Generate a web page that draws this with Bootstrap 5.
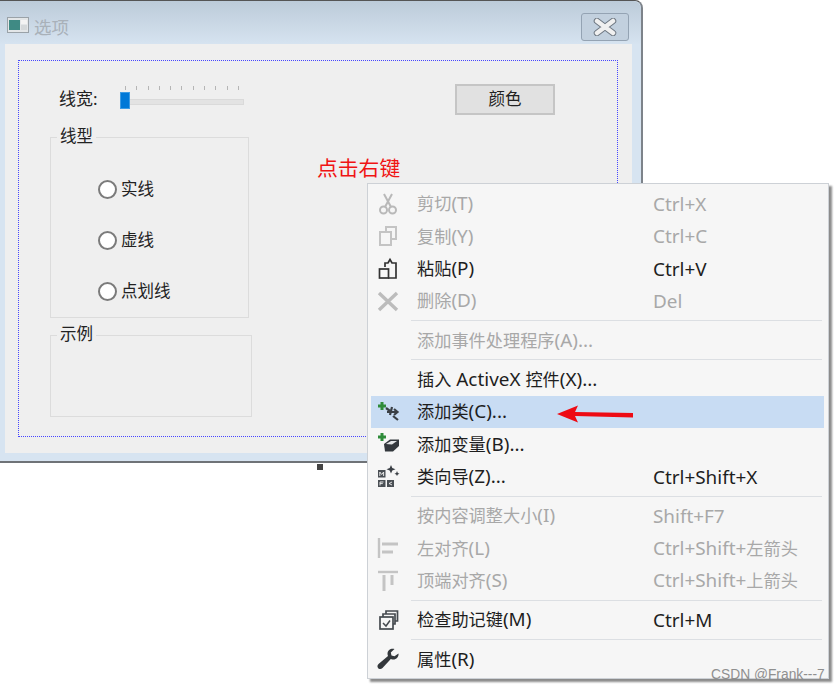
<!DOCTYPE html>
<html lang="zh-CN">

<head>
    <meta charset="UTF-8">
    <meta name="viewport" content="width=device-width, initial-scale=1.0">
    <title>选项</title>
    <link rel="stylesheet" href="https://cdn.jsdelivr.net/npm/bootstrap@5.3.2/dist/css/bootstrap.min.css">
    <style>
        body { background: #fff; font-family: "Noto Sans", "Noto Sans CJK SC", sans-serif; color: #222; overflow: hidden; }
        .stage { position: relative; width: 840px; height: 691px; overflow: hidden; }

        /* 对话框 */
        .dlg-window { width: 643px; height: 463px; background: #d7e4f1; border-top: 1px solid #555; border-right: 2px solid #7d838a; border-bottom: 2px solid #6f7377; border-top-right-radius: 8px; }
        .dlg-title { height: 43px; padding: 12px 12px 0 7px; background: linear-gradient(#bccbd9, #d6e3f0); border-top-right-radius: 8px; }
        .dlg-name { color: #a9b1b9; font-size: 17.5px; line-height: 28px; margin-left: 5px; }
        .dlg-close { width: 48px; height: 28px; border: 1px solid #94a3b3; border-radius: 3px; background: #c2d0de; }
        .dlg-client { width: 627px; height: 409px; margin-left: 5px; padding: 16px 14px 16px 13px; background: #efefef; }
        .dlg-frame { width: 600px; height: 377px; border: 1px dotted #4646ff; padding-top: 23px; font-size: 16.5px; }
        .left-col { width: 202px; margin-left: 31px; }
        .right-col { margin-left: 65px; }
        .slider-row { height: 30px; margin-left: 9px; }
        .slider-label { width: 61px; font-size: 17px; }
        .slider-box { position: relative; width: 124px; height: 26px; }
        .slider-ticks { height: 5px; margin: 0 5px; }
        .slider-ticks i { width: 1px; height: 4px; background: #b5b5b5; }
        .slider-track { margin-top: 8px; height: 6px; background: #e3e3e3; border: 1px solid #dadada; }
        .slider-thumb { position: absolute; left: 0; top: 6px; width: 10px; height: 17px; background: #0078d7; border: 1px solid #3d9be4; }
        fieldset.group-a, fieldset.group-b { border: 1px solid #dcdcdc; padding: 0; min-width: 0; }
        fieldset.group-a { width: 199px; height: 193px; margin-top: 11px; }
        fieldset.group-b { width: 202px; height: 94px; margin-top: 5px; }
        fieldset legend { float: none; width: auto; margin: 0 0 0 6px; padding: 0 3px 3px; font-size: 16.5px; line-height: 21px; }
        .radio-stack { padding: 28px 0 0 47px; gap: 27px; }
        .radio-line { height: 24px; }
        .radio-line .form-check-input { width: 19px; height: 19px; margin: 0 4px 0 0; border: 2px solid #7b7b7b; background-color: #fff; border-radius: 50%; }
        .color-btn { width: 100px; height: 31px; margin-left: 138px; padding: 0; background: #e1e1e1; border: 2px solid #c5c5c5; border-radius: 0; font-size: 16.5px; color: #222; }
        .hint-red { margin-top: 39px; color: #f01414; font-size: 20.8px; line-height: 28px; }
        .handle-dot { position: absolute; left: 317px; top: 464px; width: 6px; height: 6px; background: #444; }

        /* 右键菜单 */
        .ctx-menu { left: 367px; top: 183px; width: 462px; min-width: 0; padding: 3.6px 4px 3px 3px; margin: 0; background: #f6f6f6; border: 1px solid #cdd1d6; border-radius: 0; box-shadow: 3px 3px 2px #8b8b8b; font-size: 18.9px; }
        .ctx-menu .dropdown-item { height: 32.4px; padding: 0 0 0 5px; color: #1e1e1e; line-height: 32px; }
        .ctx-menu .dropdown-item.disabled { color: #a8a8a8; }
        .ctx-menu .dropdown-item.picked { background: #c8dcf3; }
        .ctx-menu .dropdown-divider { height: 1px; margin: 2.95px 2px 2.95px 40px; border-top: 1px solid #dcdfe3; opacity: 1; }
        .zh { font-size: 17.2px; }
        .ico { width: 24px; height: 24px; flex: none; margin-right: 17px; }
        .ctx-text { width: 236px; flex: none; }
        .red-arrow { position: absolute; left: 555px; top: 402px; z-index: 1001; }
        .mark-text { position: absolute; left: 711px; top: 665px; z-index: 1001; font-family: "Liberation Sans", sans-serif; font-size: 13.8px; line-height: 20px; color: #8f8f8f; }
    </style>
</head>

<body class="m-0">
    <div class="stage">
        <!-- 对话框 -->
        <div class="dlg-window">
            <div class="dlg-title d-flex align-items-start">
                <svg width="22" height="17" viewBox="0 0 22 17" class="mt-1">
                    <rect x="0.5" y="0.5" width="21" height="15" fill="#e3e6e8" stroke="#9aa2a8"/>
                    <rect x="2" y="3" width="11" height="10" fill="#3f8a84"/>
                    <rect x="14" y="3" width="6" height="4" fill="#f3f3f3"/>
                    <rect x="14" y="8" width="6" height="5" fill="#d4d8da"/>
                </svg>
                <span class="dlg-name">选项</span>
                <div class="dlg-close ms-auto d-flex align-items-center justify-content-center">
                    <svg width="24" height="18" viewBox="0 0 24 18">
                        <path d="M4 3 L20 15 M20 3 L4 15" stroke="#6d7680" stroke-width="6.5" stroke-linecap="round"/>
                        <path d="M4 3 L20 15 M20 3 L4 15" stroke="#f0f0f0" stroke-width="4.5" stroke-linecap="round"/>
                    </svg>
                </div>
            </div>
            <div class="dlg-client">
                <div class="dlg-frame d-flex">
                    <div class="left-col">
                        <div class="slider-row d-flex align-items-center">
                            <span class="slider-label">线宽:</span>
                            <div class="slider-box">
                                <div class="slider-ticks d-flex justify-content-between">
                                    <i></i><i></i><i></i><i></i><i></i><i></i><i></i><i></i><i></i><i></i><i></i>
                                </div>
                                <div class="slider-track"></div>
                                <div class="slider-thumb"></div>
                            </div>
                        </div>
                        <fieldset class="group-a">
                            <legend>线型</legend>
                            <div class="radio-stack d-flex flex-column">
                                <div class="radio-line d-flex align-items-center"><input class="form-check-input" type="radio" name="lineType"><span>实线</span></div>
                                <div class="radio-line d-flex align-items-center"><input class="form-check-input" type="radio" name="lineType"><span>虚线</span></div>
                                <div class="radio-line d-flex align-items-center"><input class="form-check-input" type="radio" name="lineType"><span>点划线</span></div>
                            </div>
                        </fieldset>
                        <fieldset class="group-b">
                            <legend>示例</legend>
                        </fieldset>
                    </div>
                    <div class="right-col">
                        <button type="button" class="btn color-btn">颜色</button>
                        <div class="hint-red">点击右键</div>
                    </div>
                </div>
            </div>
        </div>
        <div class="handle-dot"></div>

        <!-- 右键菜单 -->
        <div class="dropdown-menu d-block position-absolute ctx-menu">
            <a class="dropdown-item disabled d-flex align-items-center">
                <svg class="ico" viewBox="0 0 24 24" fill="none" stroke="#b9b9b9" stroke-width="2"><circle cx="7.5" cy="18" r="3.5"/><circle cx="16.5" cy="18" r="3.5"/><path d="M9 15 L16 2 M15 15 L8 2"/></svg>
                <span class="ctx-text"><span class="zh">剪切</span>(T)</span><span>Ctrl+X</span>
            </a>
            <a class="dropdown-item disabled d-flex align-items-center">
                <svg class="ico" viewBox="0 0 24 24" fill="none" stroke="#c4c4c4" stroke-width="2"><rect x="4" y="8" width="11" height="13"/><path d="M10 7 V3 H20 V15 H16"/></svg>
                <span class="ctx-text"><span class="zh">复制</span>(Y)</span><span>Ctrl+C</span>
            </a>
            <a class="dropdown-item d-flex align-items-center">
                <svg class="ico" viewBox="0 0 24 24" fill="none" stroke="#333" stroke-width="1.7"><path d="M9 10 V6 H12 L14 2.5 L16 6 H20 V21 H12"/><rect x="3.5" y="12" width="9" height="9"/></svg>
                <span class="ctx-text"><span class="zh">粘贴</span>(P)</span><span>Ctrl+V</span>
            </a>
            <a class="dropdown-item disabled d-flex align-items-center">
                <svg class="ico" viewBox="0 0 24 24" fill="none" stroke="#bcbcbc" stroke-width="3.4"><path d="M3 4 L21 21 M21 4 L3 21"/></svg>
                <span class="ctx-text"><span class="zh">删除</span>(D)</span><span>Del</span>
            </a>
            <div class="dropdown-divider"></div>
            <a class="dropdown-item disabled d-flex align-items-center">
                <span class="ico"></span><span class="ctx-text"><span class="zh">添加事件处理程序</span>(A)...</span>
            </a>
            <div class="dropdown-divider"></div>
            <a class="dropdown-item d-flex align-items-center">
                <span class="ico"></span><span class="ctx-text"><span class="zh">插入</span> ActiveX <span class="zh">控件</span>(X)...</span>
            </a>
            <a class="dropdown-item picked d-flex align-items-center">
                <svg class="ico" viewBox="0 0 24 24"><path d="M2 6 H10 M6 2 V10" stroke="#2e8b3a" stroke-width="3"/><path d="M10 8 L14 11 M16 7 L14 15 M11 12 H21 M18 9 L21.5 12 L18 15 M17 16 L22 20" stroke="#3a3f45" stroke-width="2.2" fill="none"/></svg>
                <span class="ctx-text"><span class="zh">添加类</span>(C)...</span>
            </a>
            <a class="dropdown-item d-flex align-items-center">
                <svg class="ico" viewBox="0 0 24 24"><path d="M2 5 H10 M6 1 V9" stroke="#2e8b3a" stroke-width="3"/><path d="M8 12 L14 7.5 H23 V14 L17 19.5 H9 Z" fill="#33383d"/><path d="M10 12 L15 9 H21 L16 12.5 Z" fill="#e4e6e8"/></svg>
                <span class="ctx-text"><span class="zh">添加变量</span>(B)...</span>
            </a>
            <a class="dropdown-item d-flex align-items-center">
                <svg class="ico" viewBox="0 0 24 24"><rect x="2" y="5" width="7.5" height="7.5" fill="#4a4f54"/><rect x="2" y="15" width="7.5" height="7" fill="#4a4f54"/><rect x="11" y="15" width="7" height="7" fill="#4a4f54"/><path d="M3.8 11 V7 L5.7 9.5 L7.6 7 V11 M4 20.5 V17 H7.5 M4 18.6 H6.8 M16 17 L13 18.5 L16 20" stroke="#f3f3f3" stroke-width="0.9" fill="none"/><path d="M15 0 L16.3 3 L19.5 4.2 L16.3 5.4 L15 8.5 L13.7 5.4 L10.5 4.2 L13.7 3 Z" fill="#3a3f45"/><path d="M21 6 L21.8 8 L23.5 8.7 L21.8 9.4 L21 11 L20.2 9.4 L18.5 8.7 L20.2 8 Z" fill="#3a3f45"/></svg>
                <span class="ctx-text"><span class="zh">类向导</span>(Z)...</span><span>Ctrl+Shift+X</span>
            </a>
            <div class="dropdown-divider"></div>
            <a class="dropdown-item disabled d-flex align-items-center">
                <span class="ico"></span><span class="ctx-text"><span class="zh">按内容调整大小</span>(I)</span><span>Shift+F7</span>
            </a>
            <a class="dropdown-item disabled d-flex align-items-center">
                <svg class="ico" viewBox="0 0 24 24" fill="none" stroke="#c4c4c4" stroke-width="2.4"><path d="M3 2 V22"/><path d="M6 8 H22 M6 16 H17" stroke-width="3"/></svg>
                <span class="ctx-text"><span class="zh">左对齐</span>(L)</span><span>Ctrl+Shift+<span class="zh">左箭头</span></span>
            </a>
            <a class="dropdown-item disabled d-flex align-items-center">
                <svg class="ico" viewBox="0 0 24 24" fill="none" stroke="#c4c4c4" stroke-width="2.4"><path d="M2 3 H22"/><path d="M8 6 V22 M16 6 V16" stroke-width="3"/></svg>
                <span class="ctx-text"><span class="zh">顶端对齐</span>(S)</span><span>Ctrl+Shift+<span class="zh">上箭头</span></span>
            </a>
            <div class="dropdown-divider"></div>
            <a class="dropdown-item d-flex align-items-center">
                <svg class="ico" viewBox="0 0 24 24" fill="none" stroke="#454a4f" stroke-width="1.7"><rect x="4" y="9" width="13" height="12"/><path d="M7 9 V6 H19 V16 H17 M10 6 V3 H21.5 V13 H19"/><path d="M7 15 L10 18 L14 12.5" stroke-width="1.5"/></svg>
                <span class="ctx-text"><span class="zh">检查助记键</span>(M)</span><span>Ctrl+M</span>
            </a>
            <div class="dropdown-divider"></div>
            <a class="dropdown-item d-flex align-items-center">
                <svg class="ico" viewBox="0 0 24 24"><path d="M22.5 6.5 C23 10 20 13 16.5 12.5 C15.8 12.4 15.2 12.3 14.8 12 L6.5 21 C5 22.7 2.8 22.2 2 21 C1 19.6 1.4 18 2.8 16.8 L12 9 C11.6 8.2 11.5 7.5 11.5 6.5 C11.7 3 15 1 18.5 2 L14.8 5.5 L15.5 8.5 L18.5 9.3 Z" fill="#33373b"/></svg>
                <span class="ctx-text"><span class="zh">属性</span>(R)</span>
            </a>
        </div>

        <!-- 红色箭头 -->
        <svg class="red-arrow" width="80" height="24" viewBox="0 0 80 24">
            <path d="M2 12 L23 3.5 L20 10 L78 11 L78 15.5 L20 14 L23 20.5 Z" fill="#ee0b14"/>
        </svg>

        <div class="mark-text">CSDN @Frank---7</div>
    </div>

    <script src="https://cdn.jsdelivr.net/npm/bootstrap@5.3.2/dist/js/bootstrap.bundle.min.js"></script>
</body>

</html>
